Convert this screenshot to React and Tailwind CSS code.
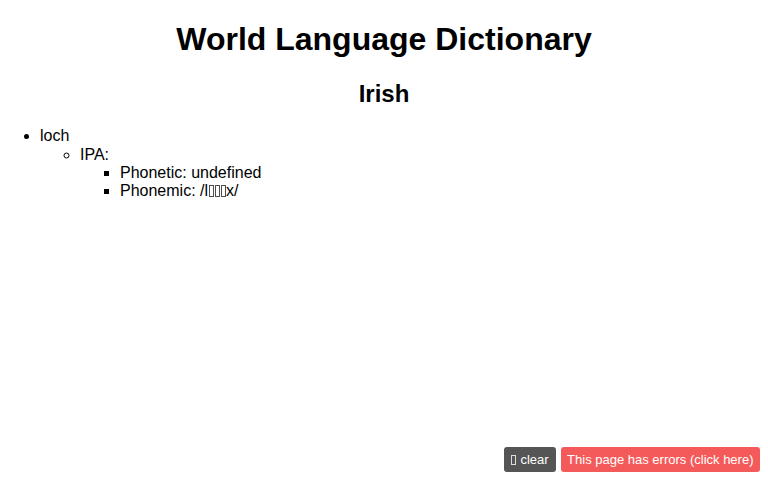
const Tofu = ({ small }) => (
  <span
    className={
      small
        ? 'inline-block align-[-1px] w-[5px] h-[10px] mr-[1px] border border-white/80'
        : 'inline-block align-[-1px] w-[5px] h-[12px] ml-[0.5px] mr-[0.5px] border border-black/70'
    }
  />
);

const App = () => {
  return (
    <div className="min-h-[480px] bg-white text-black font-['Liberation_Sans',Arial,sans-serif] pt-[21.44px]">
      <h1 className="text-[32px] font-bold text-center leading-[36.8px] mb-[21.44px]">
        World Language Dictionary
      </h1>
      <h2 className="text-[24px] font-bold text-center leading-[27.6px] mb-[19.92px]">Irish</h2>
      <ul className="list-disc pl-10 text-base leading-[18.4px]">
        <li>
          loch
          <ul className="list-[circle] pl-10">
            <li>
              IPA:
              <ul className="list-[square] pl-10">
                <li>Phonetic: undefined</li>
                <li>
                  Phonemic: /l<Tofu />
                  <Tofu />
                  <Tofu />x/
                </li>
              </ul>
            </li>
          </ul>
        </li>
      </ul>

      <div className="fixed right-2 bottom-2 flex gap-[5px] text-[13px] text-white">
        <button className="h-[25px] px-[7px] rounded-[3px] bg-[#555555]">
          <Tofu small /> clear
        </button>
        <button className="h-[25px] px-[6.5px] rounded-[3px] bg-[#f55a5a]">
          This page has errors (click here)
        </button>
      </div>
    </div>
  );
};

export default App;
